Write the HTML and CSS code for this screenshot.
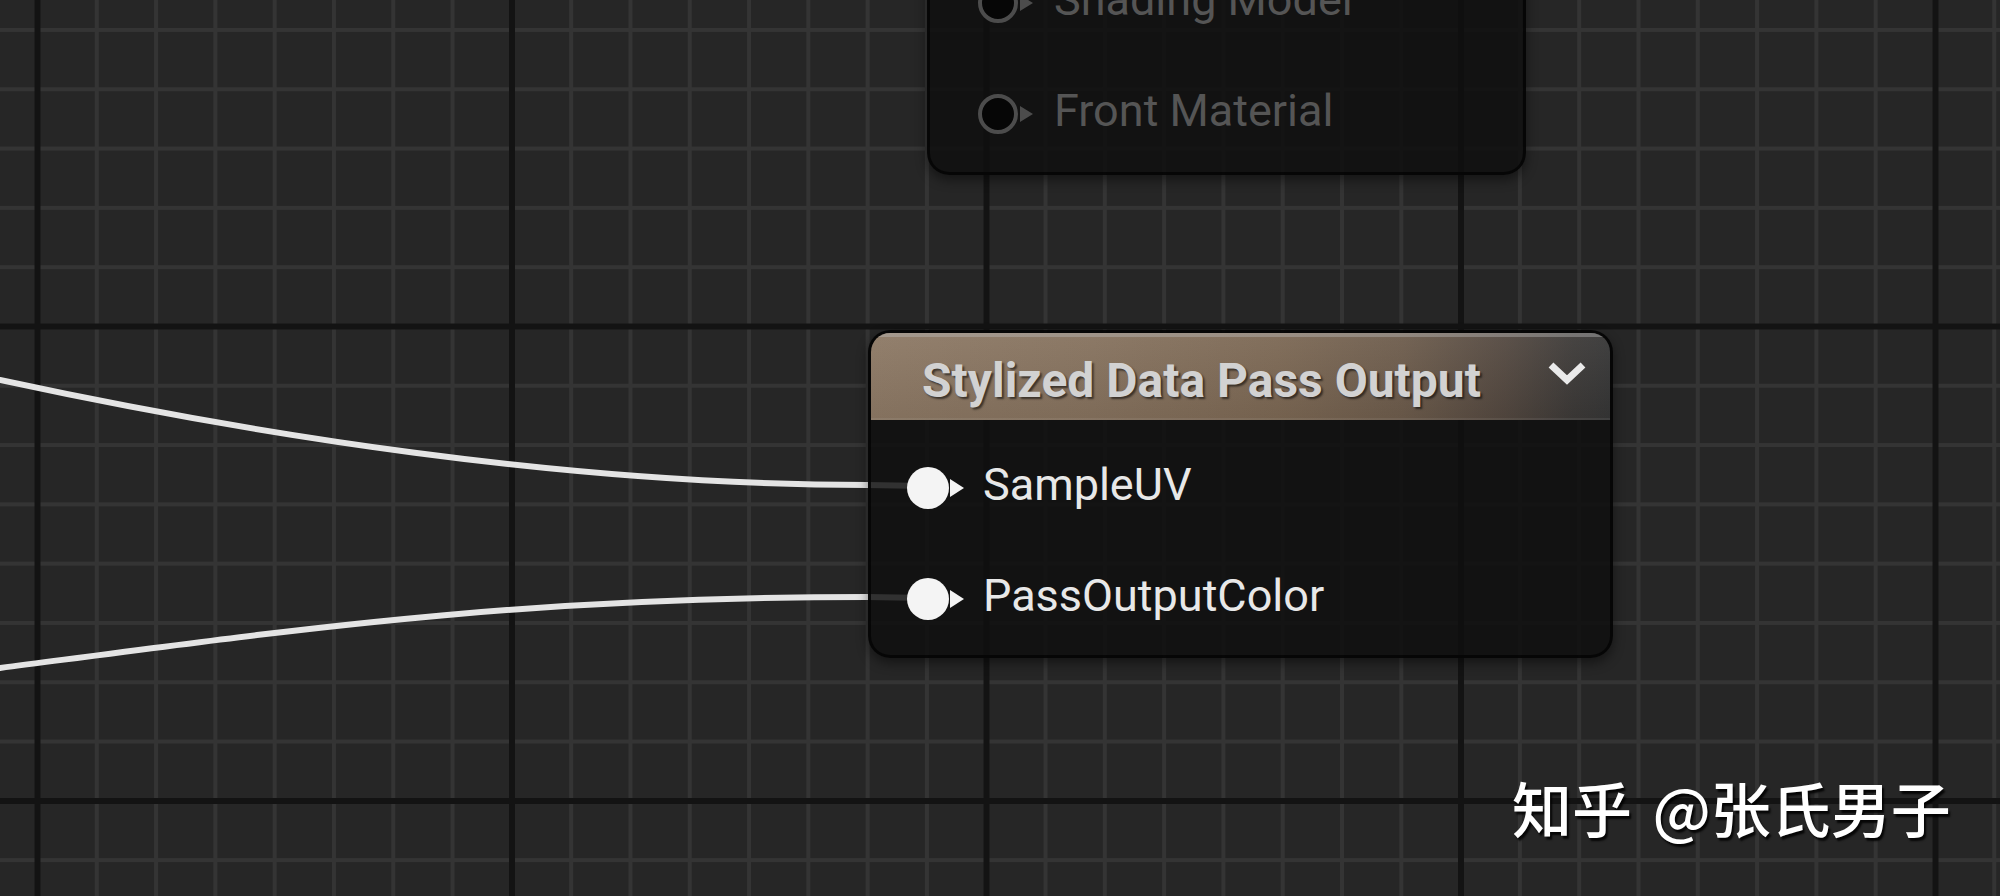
FILE: index.html
```html
<!DOCTYPE html>
<html lang="en">
<head>
<meta charset="utf-8">
<title>Material Graph</title>
<link rel="stylesheet" href="styles.css">
</head>
<body>
<div class="graph">
  <svg class="wires" width="2000" height="896" viewBox="0 0 2000 896">
    <path class="wire" d="M -40 371.2 L 0 380 C 250 434, 567 485, 867 485 L 927 486"/>
    <path class="wire" d="M -40 673.2 L 0 668 C 300 629, 517 597, 867 597 L 927 598"/>
  </svg>

  <div class="node node-upper">
    <div class="node-body">
      <div class="pin-row">
        <svg class="pin" width="56" height="40" viewBox="0 0 56 40">
          <circle cx="20" cy="20" r="18" class="ring"/>
          <polygon points="42,12 55,20 42,28" class="ring-arrow"/>
        </svg>
        <span class="pin-label">Shading Model</span>
      </div>
      <div class="pin-row">
        <svg class="pin" width="56" height="40" viewBox="0 0 56 40">
          <circle cx="20" cy="20" r="18" class="ring"/>
          <polygon points="42,12 55,20 42,28" class="ring-arrow"/>
        </svg>
        <span class="pin-label">Front Material</span>
      </div>
    </div>
  </div>

  <div class="node node-main">
    <div class="node-header">
      <span class="node-title">Stylized Data Pass Output</span>
      <svg class="chevron" width="42" height="40" viewBox="0 0 42 40">
        <polyline points="5,8 21,23 37,8"/>
      </svg>
    </div>
    <div class="node-body">
      <div class="pin-row">
        <svg class="pin" width="58" height="44" viewBox="0 0 58 44">
          <circle cx="21" cy="22" r="21" class="dot"/>
          <polygon points="43,13 57,22 43,31" class="dot"/>
        </svg>
        <span class="pin-label">SampleUV</span>
      </div>
      <div class="pin-row">
        <svg class="pin" width="58" height="44" viewBox="0 0 58 44">
          <circle cx="21" cy="22" r="21" class="dot"/>
          <polygon points="43,13 57,22 43,31" class="dot"/>
        </svg>
        <span class="pin-label">PassOutputColor</span>
      </div>
    </div>
  </div>

  <div class="watermark">知乎 @张氏男子</div>
</div>
</body>
</html>
```

FILE: styles.css
```css
html, body {
  margin: 0;
  padding: 0;
  width: 2000px;
  height: 896px;
  overflow: hidden;
  background: #262626;
}

.graph {
  position: relative;
  width: 2000px;
  height: 896px;
  overflow: hidden;
  font-family: Roboto, "Liberation Sans", sans-serif;
  background-color: #262626;
  background-image:
    linear-gradient(to right, #131313 6px, transparent 6px),
    linear-gradient(to bottom, #131313 6px, transparent 6px),
    linear-gradient(to right, #343434 4px, transparent 4px),
    linear-gradient(to bottom, #343434 4px, transparent 4px);
  background-size: 474.5px 100%, 100% 474.5px, 59.31px 100%, 100% 59.31px;
  background-position: 34.5px 0, 0 323.5px, 35.5px 0, 0 28px;
}

.wires {
  position: absolute;
  left: 0;
  top: 0;
}

.wire {
  fill: none;
  stroke: #e4e4e4;
  stroke-width: 6;
  stroke-linecap: round;
}

/* ---------- nodes ---------- */
.node {
  position: absolute;
  box-sizing: border-box;
  border: 3px solid rgba(6, 6, 6, 0.9);
  border-radius: 22px;
  background: rgba(14, 14, 14, 0.84);
  box-shadow: 0 5px 12px rgba(0, 0, 0, 0.45);
  overflow: hidden;
  display: flex;
  flex-direction: column;
}

.node-upper {
  left: 927px;
  top: -200px;
  width: 599px;
  height: 375px;
}

.node-upper .node-body {
  flex: 1;
  display: flex;
  flex-direction: column;
  justify-content: flex-end;
  padding: 0 0 3px 48px;
}

.node-upper .pin-row {
  height: 111px;
}

.node-upper .pin-label {
  color: #555555;
  margin-left: 20px;
}

.ring {
  fill: #060606;
  stroke: #4c4c4c;
  stroke-width: 4;
}

.ring-arrow {
  fill: #4c4c4c;
}

.node-main {
  left: 868px;
  top: 330px;
  width: 745px;
  height: 328px;
}

.node-header {
  box-sizing: border-box;
  height: 87px;
  display: flex;
  align-items: center;
  padding: 8px 0 0 51px;
  background:
    linear-gradient(180deg, rgba(255, 255, 255, 0.06) 0%, rgba(0, 0, 0, 0.06) 100%),
    linear-gradient(90deg, #8c7864 0%, #85715d 30%, #7b6753 55%, #6c5b4b 72%, #52473f 86%, #3c3937 95%, #353535 100%);
  box-shadow: inset 0 4px 0 rgba(190, 190, 190, 0.4), inset 0 -2px 0 rgba(255, 255, 255, 0.07);
}

.node-title {
  font-weight: 700;
  font-size: 48px;
  line-height: 48px;
  color: #d2d2d2;
  text-shadow: 2px 2px 2px rgba(0, 0, 0, 0.55);
  white-space: nowrap;
}

.chevron {
  margin-left: auto;
  margin-right: 22px;
  margin-top: -8px;
}

.chevron polyline {
  fill: none;
  stroke: #eaeaea;
  stroke-width: 7;
}

.node-main .node-body {
  flex: 1;
  display: flex;
  flex-direction: column;
  padding: 12px 0 0 36px;
}

.pin-row {
  height: 111px;
  display: flex;
  align-items: center;
  flex-shrink: 0;
}

.pin {
  flex-shrink: 0;
}

.dot {
  fill: #f4f4f4;
}

.pin-label {
  font-size: 45px;
  line-height: 45px;
  color: #e8e8e8;
  margin-left: 18px;
  padding-bottom: 7px;
  white-space: nowrap;
}

/* ---------- watermark ---------- */
.watermark {
  position: absolute;
  left: 1512px;
  top: 777px;
  font-family: "Noto Sans CJK SC", "Noto Sans", sans-serif;
  font-size: 60px;
  font-weight: 500;
  line-height: 60px;
  color: #ffffff;
  word-spacing: 7px;
  text-shadow: 2px 3px 2px rgba(0, 0, 0, 0.85);
  white-space: nowrap;
}
```
